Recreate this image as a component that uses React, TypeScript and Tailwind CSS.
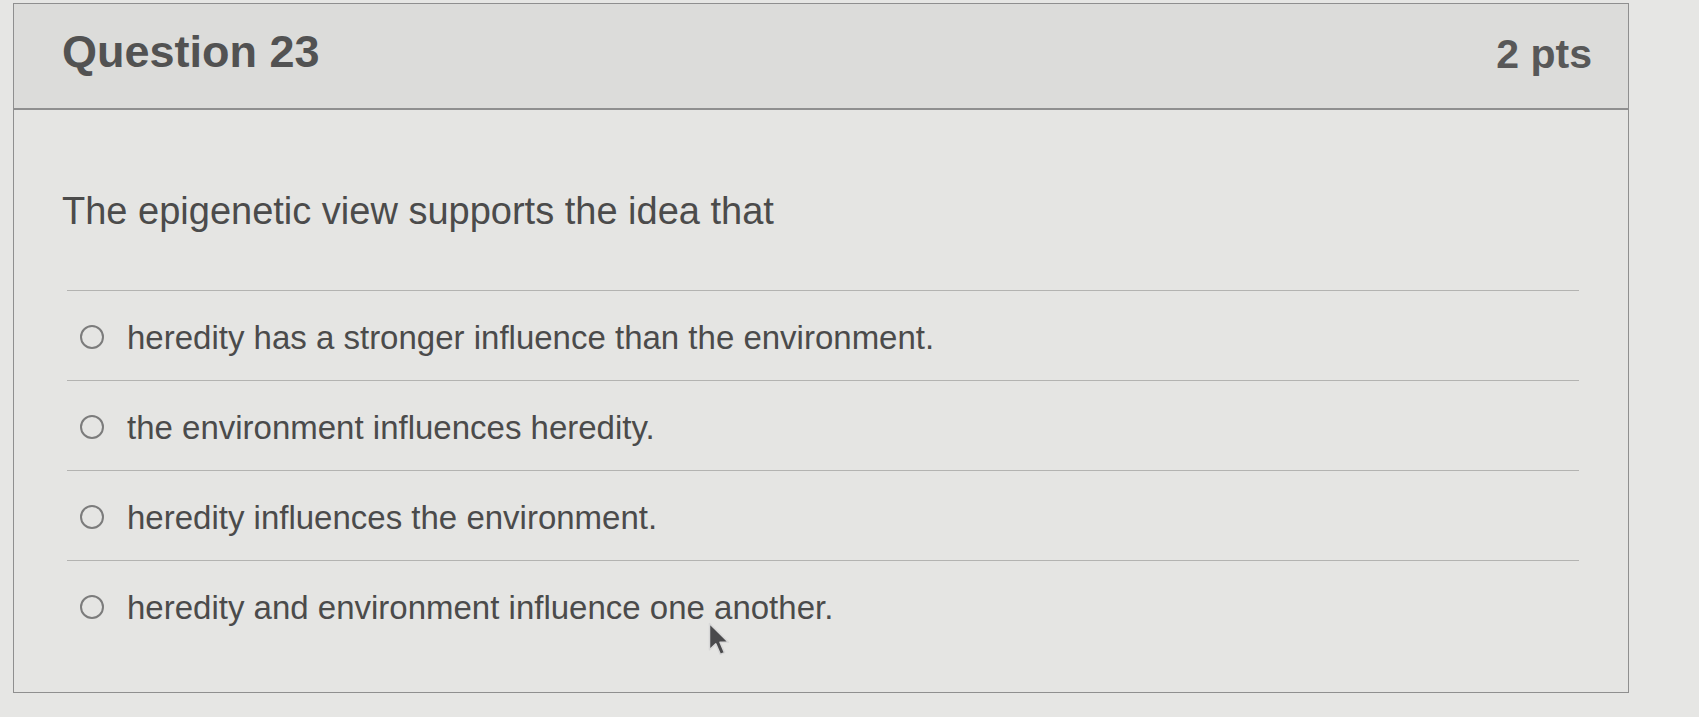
import React from 'react';

const options = [
    'heredity has a stronger influence than the environment.',
    'the environment influences heredity.',
    'heredity influences the environment.',
    'heredity and environment influence one another.',
];

function Cursor() {
    return (
        <svg width="24" height="36" viewBox="0 0 16 24" className="absolute left-[708px] top-[622px]">
            <path
                d="M1 1 L1 18.5 L5.2 14.6 L8.2 21.6 L11 20.4 L8 13.5 L13.6 13.5 Z"
                fill="#4a4a4c"
                stroke="#d8d8d8"
                strokeWidth="1"
                strokeLinejoin="round"
            />
        </svg>
    );
}

export default function App() {
    return (
        <div
            className="relative w-[1699px] h-[717px] overflow-hidden bg-[#e6e6e4] pl-[13px] pt-[3px] text-[#4b4b4b]"
            style={{ fontFamily: '"Liberation Sans", Arial, sans-serif' }}
        >
            <div className="w-[1616px] h-[690px] border border-[#8f8f8f] bg-[#e5e5e3] flex flex-col">
                {/* header */}
                <div className="h-[106px] shrink-0 bg-[#dcdcda] border-b-2 border-[#8f8f8f] flex justify-between pl-[48px] pr-[36px]">
                    <h2 className="pt-[25px] text-[45px] leading-none font-bold text-[#525252]">Question 23</h2>
                    <div className="pt-[30px] text-[41px] leading-none font-bold text-[#585858]">2 pts</div>
                </div>

                {/* body */}
                <div className="flex flex-col">
                    <p className="ml-[48px] mt-[82px] text-[38px] leading-none">The epigenetic view supports the idea that</p>

                    <div className="ml-[53px] mr-[49px] mt-[60px] flex flex-col">
                        {options.map((opt) => (
                            <label
                                key={opt}
                                className="h-[90px] border-t border-[#b3b3b1] pt-[30px] flex items-start"
                            >
                                <span className="mt-[4px] ml-[13px] w-[24px] h-[24px] rounded-full border-2 border-[#7c7c7c] shrink-0" />
                                <span className="ml-[23px] text-[33px] leading-none">{opt}</span>
                            </label>
                        ))}
                    </div>
                </div>
            </div>
            <Cursor />
        </div>
    );
}
